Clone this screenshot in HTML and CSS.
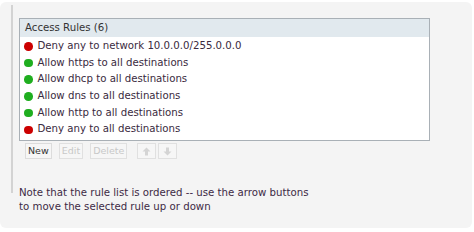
FILE: index.html
```html
<!DOCTYPE html>
<html>
<head>
<meta charset="utf-8">
<link rel="stylesheet" href="styles.css">
</head>
<body>
<div class="panel">
  <div class="section">
    <div class="listbox">
      <div class="list-header">Access Rules (6)</div>
      <ul class="rules">
        <li><span class="dot deny"></span>Deny any to network 10.0.0.0/255.0.0.0</li>
        <li><span class="dot allow"></span>Allow https to all destinations</li>
        <li><span class="dot allow"></span>Allow dhcp to all destinations</li>
        <li><span class="dot allow"></span>Allow dns to all destinations</li>
        <li><span class="dot allow"></span>Allow http to all destinations</li>
        <li><span class="dot deny"></span>Deny any to all destinations</li>
      </ul>
    </div>
    <div class="buttons">
      <button class="btn">New</button>
      <button class="btn disabled">Edit</button>
      <button class="btn disabled">Delete</button>
      <span class="arrows">
        <button class="btn disabled arrow"><svg width="9" height="9" viewBox="0 0 9 9"><path d="M4.5 0.5 L8.5 4.5 L6 4.5 L6 8.5 L3 8.5 L3 4.5 L0.5 4.5 Z" fill="#d4d4d4"/></svg></button>
        <button class="btn disabled arrow"><svg width="9" height="9" viewBox="0 0 9 9"><path d="M4.5 8.5 L8.5 4.5 L6 4.5 L6 0.5 L3 0.5 L3 4.5 L0.5 4.5 Z" fill="#d4d4d4"/></svg></button>
      </span>
    </div>
    <p class="note">Note that the rule list is ordered -- use the arrow buttons<br>to move the selected rule up or down</p>
  </div>
</div>
</body>
</html>
```
FILE: styles.css
```css
html, body {
  margin: 0;
  padding: 0;
  background: #ffffff;
}
body {
  font-family: "DejaVu Sans", Verdana, sans-serif;
  font-size: 10.2px;
  color: #333333;
}
.panel {
  width: 472px;
  height: 226px;
  margin-top: 2px;
  background: #f4f4f4;
  border-radius: 6px;
  box-sizing: border-box;
  padding-top: 3px;
}
.section {
  margin-left: 11px;
  border-left: 2px solid #d3d3d3;
  padding-left: 6px;
  padding-top: 13px;
  height: 188px;
  box-sizing: border-box;
}
.listbox {
  width: 409px;
  border: 1px solid #a9b0b6;
  background: #ffffff;
}
.list-header {
  height: 18px;
  line-height: 18px;
  background: #e1e9ee;
  padding-left: 5px;
  color: #333;
}
.rules {
  list-style: none;
  margin: 0;
  padding: 1px 0 2px 0;
}
.rules li {
  height: 16.7px;
  line-height: 16.7px;
  padding-left: 4px;
  display: flex;
  align-items: center;
  color: #3a2a40;
}
.dot {
  width: 8.5px;
  height: 8.5px;
  border-radius: 50%;
  margin-right: 5px;
  flex: none;
}
.dot.deny { background: #cc0000; }
.dot.allow { background: #1fae1f; }
.buttons {
  display: flex;
  align-items: center;
  margin-top: 2px;
  padding-left: 6px;
}
.btn {
  font-family: "DejaVu Sans", Verdana, sans-serif;
  font-size: 9.5px;
  height: 16px;
  padding: 0 2px;
  margin-right: 7px;
  background: #f6f6f6;
  border: 1px solid #dcdcdc;
  color: #333;
  border-radius: 0;
  box-sizing: border-box;
  line-height: 14px;
}
.btn.disabled {
  color: #c8c8c8;
  border-color: #e0e0e0;
}
.arrows {
  display: flex;
  margin-left: 3px;
}
.btn.arrow {
  width: 19px;
  margin-right: 2px;
  display: flex;
  align-items: center;
  justify-content: center;
  padding: 0;
}
.note {
  margin: 27px 0 0 0;
  line-height: 14px;
  color: #3d2a45;
}
```
